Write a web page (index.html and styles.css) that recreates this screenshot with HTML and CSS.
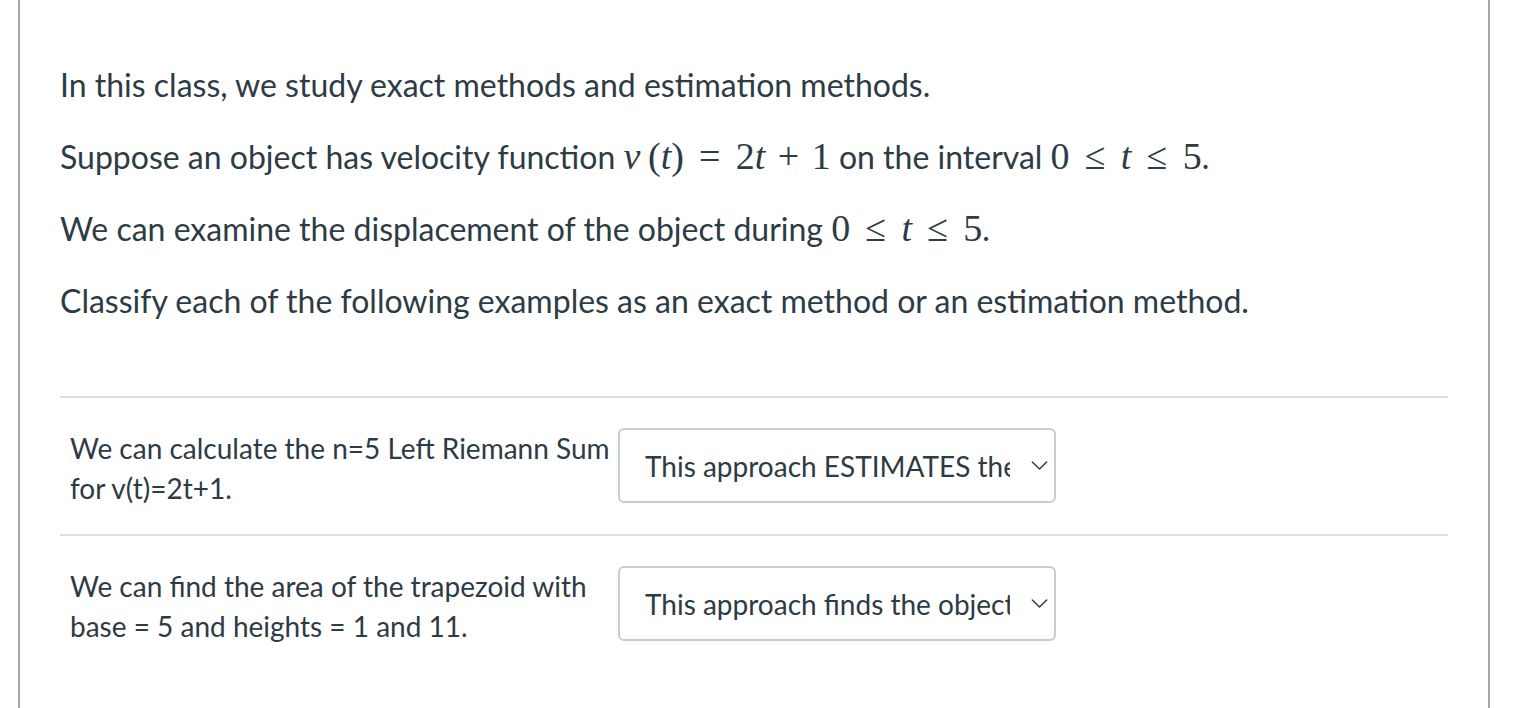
FILE: index.html
```html
<!DOCTYPE html>
<html lang="en">
  <head>
    <meta charset="UTF-8" />
    <meta name="viewport" content="width=device-width, initial-scale=1.0" />
    <title>Question</title>
    <link rel="stylesheet" href="styles.css">
  </head>
  <body>
    <div class="question">
      <div class="question-text">
        <p>In this class, we study exact methods and estimation methods.</p>
        <p>
          Suppose an object has velocity function
          <span class="math"><i>v</i><span class="fn-gap"></span>(<i>t</i>)<span class="rel">=</span>2<i>t</i><span class="bin">+</span>1</span>
          on the interval
          <span class="math">0<span class="rel">&le;</span><i>t</i><span class="rel">&le;</span>5</span>.
        </p>
        <p>
          We can examine the displacement of the object during
          <span class="math">0<span class="rel">&le;</span><i>t</i><span class="rel">&le;</span>5</span>.
        </p>
        <p>Classify each of the following examples as an exact method or an estimation method.</p>
      </div>

      <div class="answers">
        <div class="answer-row">
          <div class="answer-label">We can calculate the n=5 Left Riemann Sum for v(t)=2t+1.</div>
          <div class="select-wrap">
            <select class="answer-select">
              <option>This approach ESTIMATES the object's displacement.</option>
              <option>This approach finds the object's EXACT displacement.</option>
            </select>
            <svg class="chevron" viewBox="0 0 18 10" fill="none" stroke="currentColor" stroke-width="1.6">
              <path d="M1 1l8 8 8-8" stroke-linecap="round" stroke-linejoin="round" />
            </svg>
          </div>
        </div>

        <div class="answer-row">
          <div class="answer-label">We can find the area of the trapezoid with base = 5 and heights = 1 and 11.</div>
          <div class="select-wrap">
            <select class="answer-select">
              <option>This approach finds the object's EXACT displacement.</option>
              <option>This approach ESTIMATES the object's displacement.</option>
            </select>
            <svg class="chevron" viewBox="0 0 18 10" fill="none" stroke="currentColor" stroke-width="1.6">
              <path d="M1 1l8 8 8-8" stroke-linecap="round" stroke-linejoin="round" />
            </svg>
          </div>
        </div>
      </div>
    </div>
  </body>
</html>
```

FILE: styles.css
```css
:root {
  --text-color: #2d3b45;
  --frame-color: #a8a8a8;
  --divider-color: #dfdfdf;
  --select-border: #c7cdd1;
}

* {
  box-sizing: border-box;
}

body {
  margin: 0;
  padding: 0;
  background-color: white;
  color: var(--text-color);
  font-family: Lato, "Liberation Sans", sans-serif;
}

.question {
  margin-left: 18px;
  width: 1472px;
  min-height: 100vh;
  padding: 64px 40px 0 40px;
  border-left: 2px solid var(--frame-color);
  border-right: 2px solid var(--frame-color);
}

.question-text p {
  margin: 0 0 30px;
  font-size: 32px;
  line-height: 42px;
}

/* formulas */
.math {
  font-family: "Liberation Serif", "DejaVu Serif", serif;
  font-size: 38px;
  line-height: 0;
  white-space: nowrap;
}

.math i {
  font-style: italic;
}

.fn-gap {
  display: inline-block;
  width: 0.2em;
}

.rel {
  padding: 0 0.4em;
}

.bin {
  padding: 0 0.33em;
}

.answers {
  margin-top: 74px;
}

.answer-row {
  display: flex;
  align-items: flex-start;
  gap: 6px;
  padding: 30px 0 26px 10px;
  border-top: 2px solid var(--divider-color);
}

.answer-label {
  width: 542px;
  font-size: 28px;
  line-height: 40px;
}

.select-wrap {
  position: relative;
  width: 438px;
}

.answer-select {
  appearance: none;
  width: 100%;
  height: 75px;
  padding: 0 44px 0 25px;
  border: 2px solid var(--select-border);
  border-radius: 6px;
  background-color: white;
  color: var(--text-color);
  font-family: Lato, "Liberation Sans", sans-serif;
  font-size: 28px;
  text-overflow: clip;
}

.chevron {
  position: absolute;
  right: 8px;
  top: 33px;
  width: 17px;
  height: 9px;
  color: var(--text-color);
  pointer-events: none;
}
```
